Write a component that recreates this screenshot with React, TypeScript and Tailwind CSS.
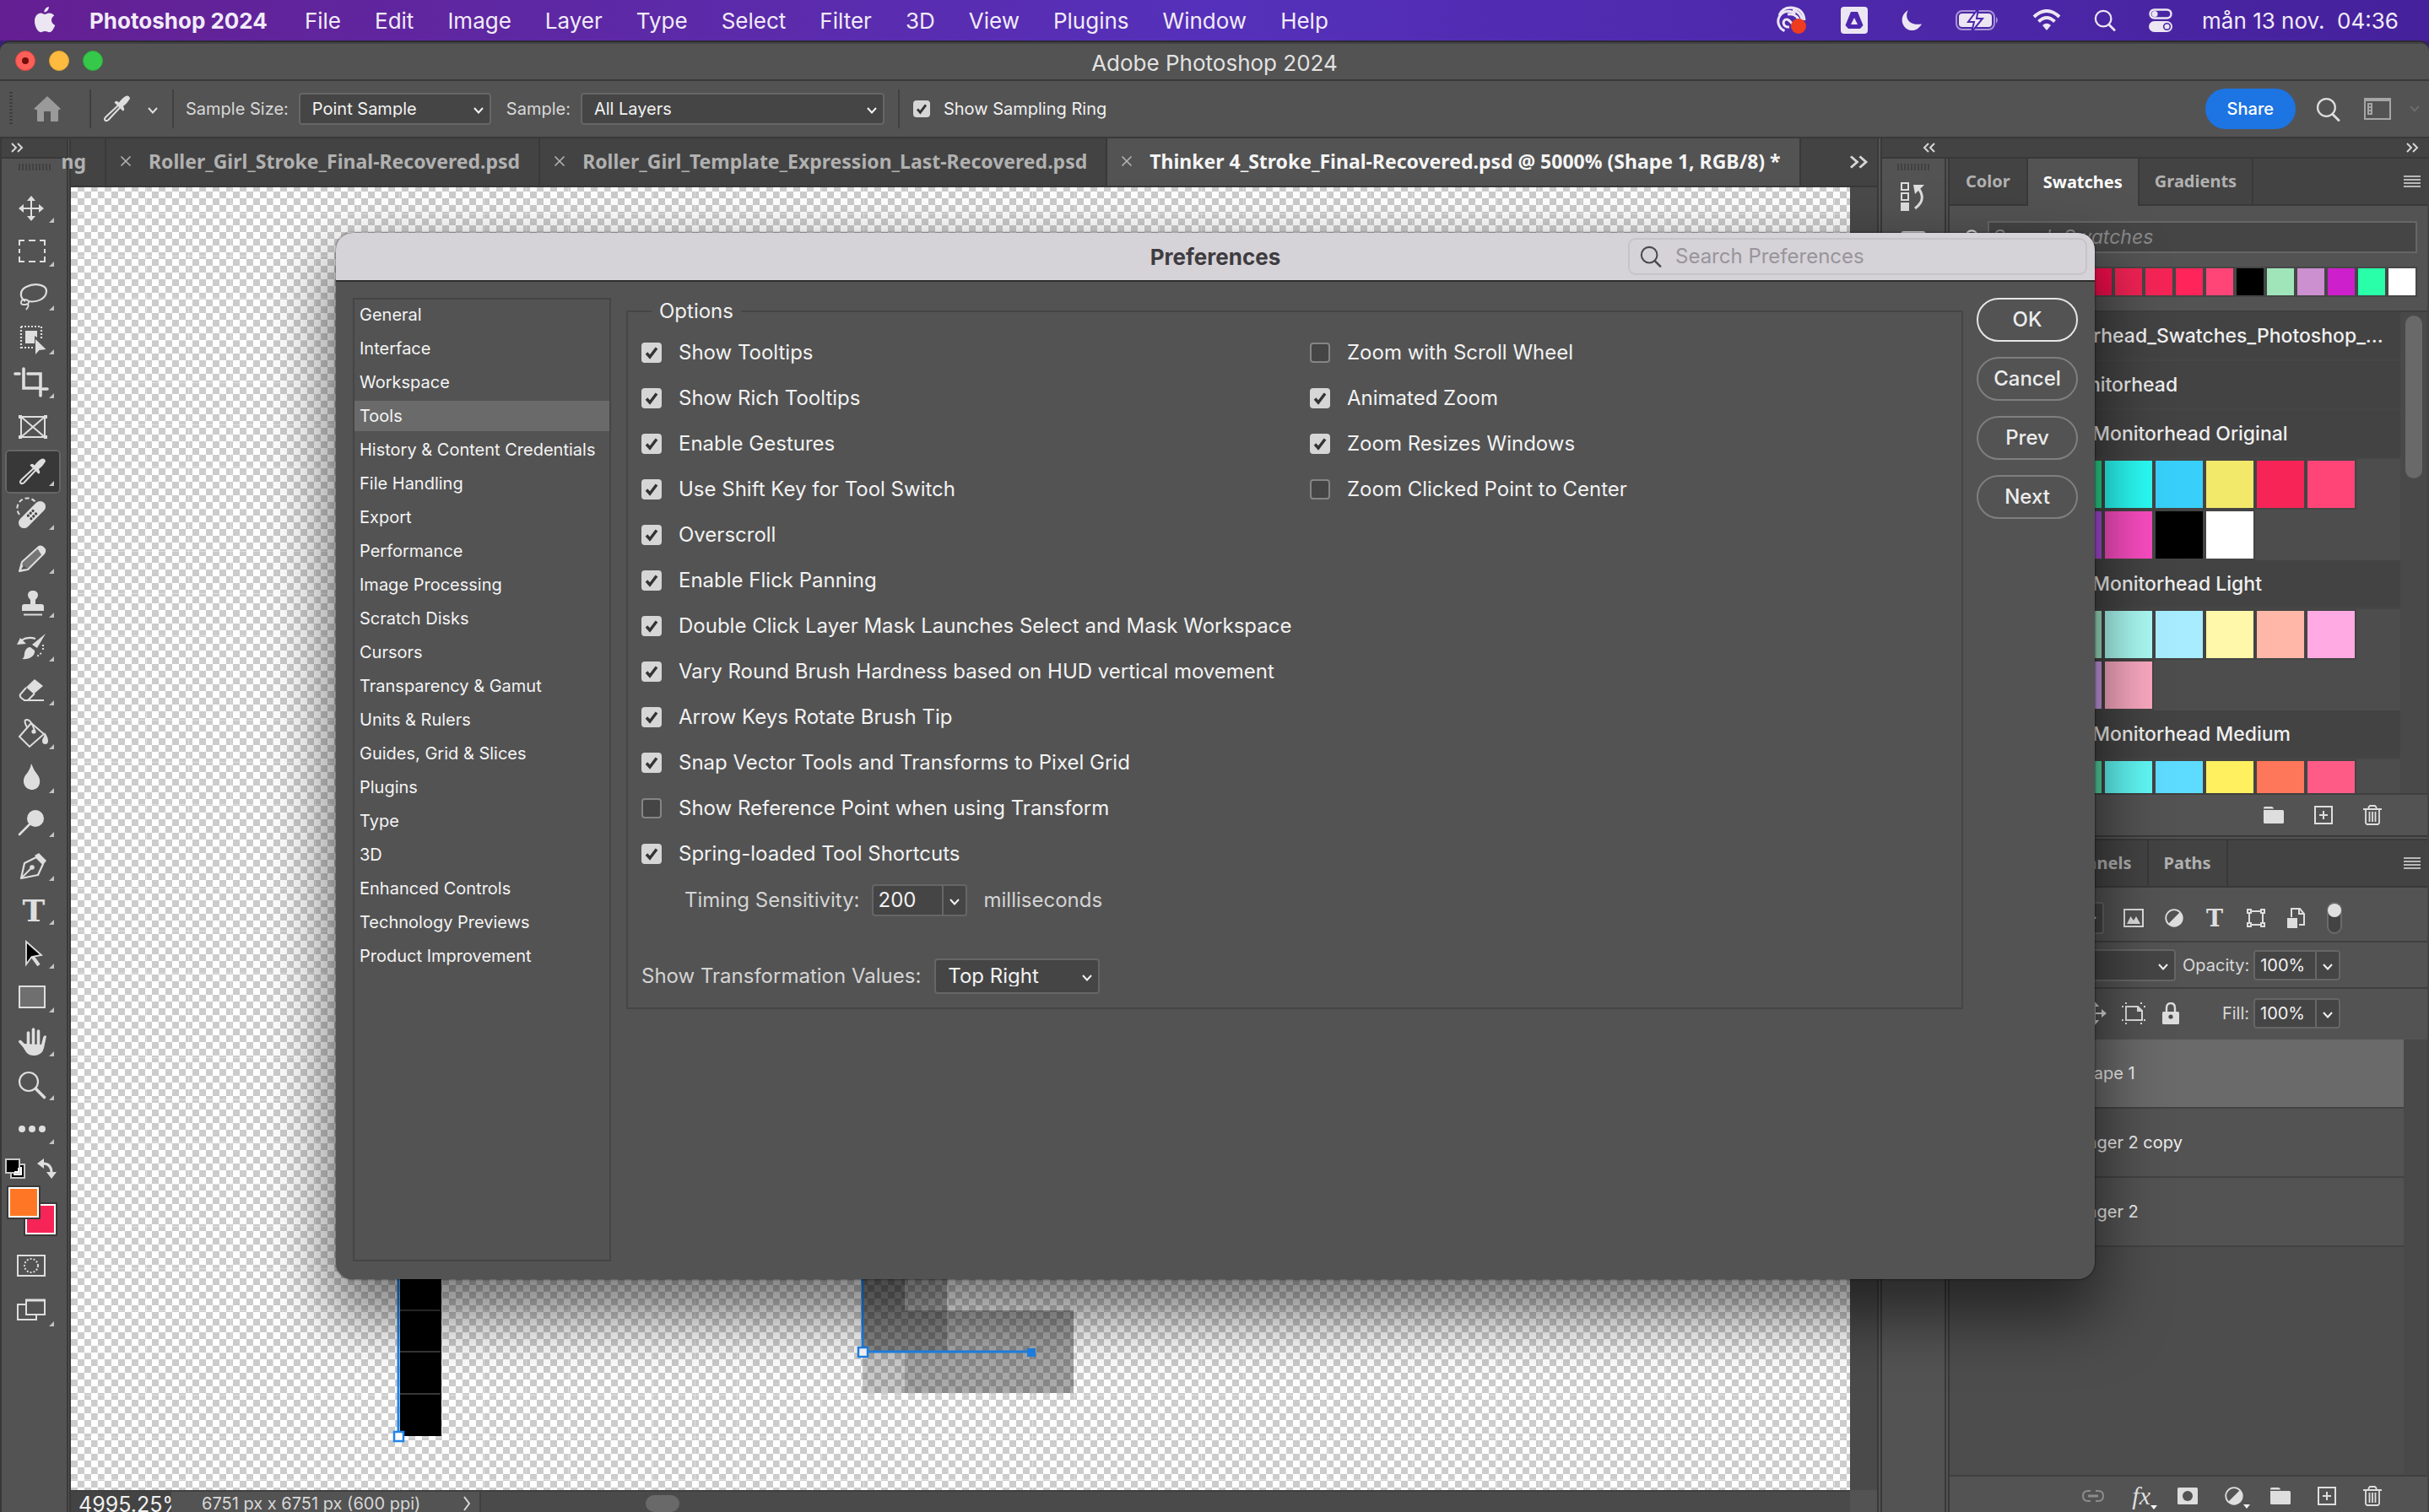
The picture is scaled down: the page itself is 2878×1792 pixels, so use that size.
import React from 'react';

const ink = '#dedede';

/* ---------- shared glyphs ---------- */

function Svg({ w, h, children, className = '' }: { w: number; h: number; children: React.ReactNode; className?: string }) {
  return (
    <svg width={w} height={h} viewBox={`0 0 ${w} ${h}`} fill="none" className={`shrink-0 ${className}`} aria-hidden="true">
      {children}
    </svg>
  );
}

function Chevron({ className = '' }: { className?: string }) {
  return (
    <Svg w={14} h={10} className={className}>
      <path d="M2 2l5 5.500L12 2" stroke="currentColor" strokeWidth="2" />
    </Svg>
  );
}

function DoubleChevron({ flip = false, big = false }: { flip?: boolean; big?: boolean }) {
  return (
    <svg width={big ? 24 : 16} height={big ? 16 : 12} viewBox="0 0 16 12" preserveAspectRatio="none" fill="none" aria-hidden="true" className={flip ? 'rotate-180' : ''}>
      <path d="M2 1l5 5-5 5M9 1l5 5-5 5" stroke="#d6d6d6" strokeWidth="2" />
    </svg>
  );
}

function Magnifier({ size, color, weight = 2.4 }: { size: number; color: string; weight?: number }) {
  return (
    <svg width={size} height={size} viewBox="0 0 28 28" fill="none" aria-hidden="true" className="shrink-0">
      <circle cx="12" cy="12" r="10" stroke={color} strokeWidth={weight} />
      <path d="M19 19.500l7 7" stroke={color} strokeWidth={weight + 0.6} strokeLinecap="round" />
    </svg>
  );
}

function TabClose() {
  return (
    <Svg w={14} h={14}>
      <path d="M1.500 1.500l11 11M12.500 1.500l-11 11" stroke="#b4b4b4" strokeWidth="1.600" />
    </Svg>
  );
}

function Lines() {
  return (
    <Svg w={20} h={16}>
      <path d="M0 2h20M0 6h20M0 10h20M0 14h20" stroke="#b8b8b8" strokeWidth="2" />
    </Svg>
  );
}

function Grip() {
  return (
    <Svg w={38} h={8}>
      <path d="M1 0v8M5 0v8M9 0v8M13 0v8M17 0v8M21 0v8M25 0v8M29 0v8M33 0v8M37 0v8" stroke="#414141" strokeWidth="2" />
    </Svg>
  );
}

function Folder() {
  return (
    <Svg w={24} h={22}>
      <path d="M0 3.500V2.500Q0 1 1.500 1H10l2 1.800V3.500Z" fill={ink} />
      <path d="M0 5h22.500Q24 5 24 6.500V19.500Q24 21 22.500 21H1.500Q0 21 0 19.500Z" fill={ink} />
    </Svg>
  );
}

function PlusBox() {
  return (
    <Svg w={22} h={22}>
      <rect x="1" y="1" width="20" height="20" stroke={ink} strokeWidth="2" />
      <path d="M11 6v10M6 11h10" stroke={ink} strokeWidth="2" />
    </Svg>
  );
}

function Trash() {
  return (
    <Svg w={22} h={24}>
      <path d="M0 5h22M6.500 5V2.500L8 1h6l1.500 1.500V5M3 5v16.500L4.500 23h13l1.500-1.500V5M7.500 8v12M11 8v12M14.500 8v12" stroke={ink} strokeWidth="1.800" />
    </Svg>
  );
}

function HalfCircle() {
  return (
    <Svg w={22} h={22}>
      <circle cx="11" cy="11" r="9.800" stroke={ink} strokeWidth="1.800" />
      <path d="M18 4A9.900 9.900 0 0 1 4 18Z" fill={ink} />
    </Svg>
  );
}

/* ---------- form parts ---------- */

function Check({ label, checked, small = false }: { label: string; checked: boolean; small?: boolean }) {
  return (
    <label className={small ? 'flex items-center gap-4 text-[20px] text-[#f0f0f0]' : 'flex h-[54px] items-center gap-5 text-[24px] text-[#f2f2f2]'}>
      <span className={small ? 'grid size-5 place-items-center' : 'grid size-6 place-items-center'}>
        <input
          type="checkbox"
          defaultChecked={checked}
          className="peer col-start-1 row-start-1 size-full appearance-none rounded-[4px] border-2 border-[#858585] bg-[#454545] checked:border-[#d6d6d6] checked:bg-[#d6d6d6]"
        />
        <svg viewBox="0 0 24 24" fill="none" className="pointer-events-none invisible col-start-1 row-start-1 size-full peer-checked:visible" aria-hidden="true">
          <path d="M6 12.500l4 4.500 8-10.500" stroke="#333" strokeWidth="3.400" />
        </svg>
      </span>
      {label}
    </label>
  );
}

function Dropdown({ label, value, className }: { label: string; value: string; className: string }) {
  return (
    <span className="relative flex items-center text-[#f2f2f2]">
      <select
        aria-label={label}
        className={`appearance-none rounded-[4px] border-2 border-[#666] bg-[#454545] pl-[14px] leading-none ${className}`}
      >
        <option>{value}</option>
      </select>
      <Chevron className="pointer-events-none absolute right-2 mt-1" />
    </span>
  );
}

function NumberCombo({ id, label, value, className }: { id: string; label: string; value: string; className: string }) {
  return (
    <span className="flex items-stretch overflow-hidden rounded-[4px] border-2 border-[#666] bg-[#454545] text-[#f2f2f2]">
      <input id={id} defaultValue={value} className={`min-w-0 bg-transparent pl-[6px] ${className}`} />
      <button aria-label={`${label} presets`} className="flex w-7 items-center justify-center border-l-2 border-[#666] pt-1">
        <Chevron />
      </button>
    </span>
  );
}

/* ---------- system menu bar ---------- */

const menus = ['File', 'Edit', 'Image', 'Layer', 'Type', 'Select', 'Filter', '3D', 'View', 'Plugins', 'Window', 'Help'];

function MenuBar() {
  return (
    <header className="flex h-12 shrink-0 items-center justify-between bg-linear-to-r from-[#641f92] via-[#5530ba] to-[#46219c] pr-9 pl-10 text-[26px] text-[#f1ebf7]">
      <nav className="flex items-center gap-10" aria-label="Application menu">
        <button aria-label="Apple" className="flex">
          <Svg w={26} h={34}>
            <path
              d="M17.800 1c.4 3.400-2.600 6.600-5.400 6.500C12 4.400 15 1.200 17.800 1ZM12.900 9.900c1.400 0 3.100-1.500 5.500-1.500 2.200 0 4.600 1.200 5.800 3.200-4.800 2.900-4 9.300 1 11.300-.9 2.700-3.600 8.300-6.700 8.300-2 0-2.700-1.200-5.200-1.200s-3.300 1.200-5.200 1.200C5 31.200 1 24.300 1 18.300 1 12 4.800 8.500 8.300 8.500c2 0 3.500 1.400 4.600 1.400Z"
              fill="#ece6f3"
            />
          </Svg>
        </button>
        <button className="mr-1 font-bold">Photoshop 2024</button>
        {menus.map((m) => (
          <button key={m}>{m}</button>
        ))}
      </nav>
      <div className="flex items-center gap-[39px]">
        <Svg w={42} h={34}>
          <path d="M14.500 29.500A12 12 0 1 1 27 9.500M8 11Q12 2 22 2q15 1 16 15" stroke="#ece6f3" strokeWidth="3" />
          <path d="M20 25c-8 1-9-9-3-9 5 0 5 8 14 9M18 10c9-2 14 5 14 10M24 5c7 1 11 7 11 12" stroke="#ece6f3" strokeWidth="3" />
          <circle cx="31" cy="24" r="9" fill="#ef3b1e" />
        </Svg>
        <Svg w={32} h={32}>
          <rect width="32" height="32" rx="4" fill="#ece6f3" />
          <path d="M12 6h8l6.500 16L23 26H9l-3.500-4ZM16 13l-4 8h8Z" fill="#4c27ad" fillRule="evenodd" />
        </Svg>
        <Svg w={26} h={26}>
          <path d="M9 1C4 9 9 20 25 17.500 21 24 16 25.500 12 25 1 23-3 8 9 1Z" fill="#ece6f3" />
        </Svg>
        <Svg w={52} h={26}>
          <rect x="1" y="2" width="45" height="22" rx="7" stroke="#a793d6" strokeWidth="2" />
          <rect x="4" y="5" width="39" height="16" rx="4" fill="#ece6f3" />
          <path d="M48 9q4 3.500 0 8Z" fill="#a793d6" />
          <path d="M27-1L15 15h7l-3 12 13-16h-7Z" fill="#ece6f3" stroke="#4c27ad" strokeWidth="2" />
        </Svg>
        <Svg w={34} h={26}>
          <path d="M2 9q15-14 30 0M7.500 14.500q9.500-9 19 0" stroke="#ece6f3" strokeWidth="4" />
          <path d="M12 19q5-4.500 10 0l-5 6Z" fill="#ece6f3" />
        </Svg>
        <Magnifier size={26} color="#ece6f3" />
        <Svg w={28} h={28}>
          <rect x="1.500" y="1.500" width="25" height="10" rx="5" stroke="#ece6f3" strokeWidth="2.400" />
          <circle cx="7" cy="6.500" r="3.600" fill="#ece6f3" />
          <rect x="0" y="15" width="28" height="13" rx="6.500" fill="#ece6f3" />
          <circle cx="21.500" cy="21.500" r="3.800" stroke="#4a25a8" strokeWidth="1.600" />
        </Svg>
        <span className="-ml-1 whitespace-pre">mån 13 nov.  04:36</span>
      </div>
    </header>
  );
}

/* ---------- options bar ---------- */

function Dropper({ size }: { size: number }) {
  return (
    <svg width={size} height={size} viewBox="0 0 32 32" fill="none" aria-hidden="true">
      <path d="M19 11L3.500 25.500Q1 28 2.500 29.500T6.500 29L21 13.500" stroke={ink} strokeWidth="2" />
      <path d="M13.500 8.500Q15 6 17 7l2 1.500C21 6 23 3 26 1.500Q29-.5 31 1.500T30.500 6C29 9 26 11 24 13l1 2.500Q26 18 23.500 18.500Z" fill={ink} />
    </svg>
  );
}

function OptionsBar() {
  return (
    <section aria-label="Tool options" className="flex h-[68px] shrink-0 items-center border-b-2 border-[#393939] bg-[#535353] text-[20px] text-[#d8d8d8]">
      <Svg w={6} h={40} className="ml-[10px]">
        <path d="M3 0v40" stroke="#404040" strokeWidth="4" strokeDasharray="2 2" />
      </Svg>
      <button aria-label="Home" className="ml-6">
        <Svg w={32} h={30}>
          <path d="M16 0L32 15l-3 1.500V29q0 1-1 1h-8V18h-8v12H5q-1 0-1-1V16.500L0 15Z" fill="#9a9a9a" />
        </Svg>
      </button>
      <span className="ml-[34px] h-[46px] w-0.5 bg-[#404040]" />
      <button aria-label="Eyedropper presets" className="ml-[14px] flex items-center gap-5 text-[#dedede]">
        <Dropper size={32} />
        <Chevron className="mt-1" />
      </button>
      <span className="ml-4 h-[46px] w-0.5 bg-[#404040]" />
      <span className="mr-3 ml-[14px]">Sample Size:</span>
      <Dropdown label="Sample Size" value="Point Sample" className="h-[38px] w-[228px]" />
      <span className="mr-3 ml-[18px]">Sample:</span>
      <Dropdown label="Sample" value="All Layers" className="h-[38px] w-[360px]" />
      <span className="mr-4 ml-4 h-[46px] w-0.5 bg-[#404040]" />
      <Check small checked label="Show Sampling Ring" />
      <div className="ml-auto flex items-center pr-[10px]">
        <button className="h-12 rounded-full bg-[#1d74e3] px-[26px] font-medium text-white">Share</button>
        <button aria-label="Search" className="ml-6">
          <Magnifier size={29} color={ink} weight={2.2} />
        </button>
        <button aria-label="Workspace" className="ml-7">
          <Svg w={32} h={26}>
            <path d="M1 1h30v24H1Z" stroke="#a5a5a5" strokeWidth="2" />
            <path d="M1 2.500h30" stroke="#a5a5a5" strokeWidth="3" />
            <path d="M4 6h6v14H4Z" fill="#a5a5a5" />
            <path d="M7 8v10" stroke="#535353" strokeWidth="2" strokeDasharray="2 2" />
          </Svg>
        </button>
        <Chevron className="ml-[21px] text-[#6c6c6c]" />
      </div>
    </section>
  );
}

/* ---------- tools column ---------- */

const serifT = (x: number, y: number, size: number) => (
  <text x={x} y={y} textAnchor="middle" fontFamily="DejaVu Serif" fontWeight="700" fontSize={size} fill={ink}>
    T
  </text>
);

const tools: { name: string; art: React.ReactNode; more?: boolean }[] = [
  {
    name: 'Move',
    art: (
      <>
        <path d="M17 26h28M31 12v28" stroke={ink} strokeWidth="2" />
        <path d="M31 11l5 6H26ZM31 41l5-6H26ZM16 26l6-5v10ZM46 26l-6-5v10Z" fill={ink} />
      </>
    ),
  },
  { name: 'Rectangular Marquee', art: <path d="M17 18v-6h6M28 12h8M41 12h6v6M47 22v5M47 31v6h-6M36 37h-8M23 37h-6v-6M17 27v-5" stroke={ink} strokeWidth="2" /> },
  {
    name: 'Lasso',
    art: (
      <>
        <path d="M24 32C17 28 17 19 25 15c10-5 24-3 24 5 0 9-11 14-22 12" stroke={ink} strokeWidth="2.200" />
        <path d="M22 30q6 0 6 3t-5 3-4-3 3-3Zm3 5q4 1 2 4l-2 3" stroke={ink} strokeWidth="1.800" />
      </>
    ),
  },
  {
    name: 'Object Selection',
    art: (
      <>
        <path d="M19 10h24M19 10v26M43 10v15M19 35h14" stroke={ink} strokeWidth="2.200" strokeDasharray="2 2" />
        <path d="M24 15h14v8l-3-2v9H24Z" fill={ink} />
        <path d="M36 25v18l4.500-5 8-1Z" fill={ink} />
      </>
    ),
  },
  { name: 'Crop', art: <path d="M12 14h5M22 8v23h18M27 14h15v26M45 32h5" stroke={ink} strokeWidth="3.600" strokeLinecap="round" /> },
  {
    name: 'Frame',
    more: false,
    art: (
      <>
        <path d="M19 13h28v24H19ZM19 13l28 24M47 13L19 37" stroke={ink} strokeWidth="2" />
        <path d="M16 11h4v4h-4ZM46 11h4v4h-4ZM16 35h4v4h-4ZM46 35h4v4h-4Z" fill={ink} />
      </>
    ),
  },
  {
    name: 'Eyedropper',
    art: (
      <g transform="translate(16 10)">
        <path d="M19 11L3.500 25.500Q1 28 2.500 29.500T6.500 29L21 13.500" stroke={ink} strokeWidth="2" />
        <path d="M13.500 8.500Q15 6 17 7l2 1.500C21 6 23 3 26 1.500Q29-.5 31 1.500T30.500 6C29 9 26 11 24 13l1 2.500Q26 18 23.500 18.500Z" fill={ink} />
      </g>
    ),
  },
  {
    name: 'Spot Healing Brush',
    art: (
      <>
        <path d="M17 25a12 12 0 0 1 19-15" stroke={ink} strokeWidth="2" strokeDasharray="5 3" />
        <g transform="rotate(-45 32 25)">
          <rect x="12" y="18.500" width="40" height="13" rx="6.500" fill={ink} />
          <circle cx="28" cy="22.500" r="1.600" fill="#444" />
          <circle cx="32" cy="27.500" r="1.600" fill="#444" />
          <circle cx="36" cy="22.500" r="1.600" fill="#444" />
          <circle cx="28" cy="27.500" r="1.600" fill="#444" />
          <circle cx="36" cy="27.500" r="1.600" fill="#444" />
          <circle cx="32" cy="22.500" r="1.600" fill="#444" />
        </g>
      </>
    ),
  },
  {
    name: 'Pencil',
    art: (
      <>
        <path d="M17 40l3-11 20-18q4-2 7 4-1 4-2 5L27 38Z" fill="#767676" stroke={ink} strokeWidth="2" strokeLinejoin="round" />
        <path d="M38 12.500q4-4 8-1t1 8l-3 2.500ZM17 40l3-8 5 6Z" fill={ink} />
        <path d="M19 38l3-5 4 4Z" fill="#535353" />
      </>
    ),
  },
  {
    name: 'Clone Stamp',
    art: (
      <>
        <path d="M33 11q6 0 6 5.500 0 3-3 5.500v5h7q3 0 3 3v5H20v-5q0-3 3-3h7v-5q-3-2.500-3-5.500Q27 11 33 11Z" fill={ink} />
        <path d="M22 39.500h22" stroke={ink} strokeWidth="2" />
      </>
    ),
  },
  {
    name: 'History Brush',
    art: (
      <>
        <path d="M48 10L38 27l-6-4ZM30 26l5 4c1 6-6 11-15 10 4-2 2-6 4-10 2-4 5-4 6-4Z" fill={ink} />
        <path d="M14 23l4-8 7 7Z" fill={ink} />
        <path d="M19 18q8-5 17-2" stroke={ink} strokeWidth="2" />
        <path d="M45 23v8M43 33l-5 4" stroke={ink} strokeWidth="2" strokeDasharray="2 2" />
      </>
    ),
  },
  {
    name: 'Eraser',
    art: (
      <>
        <path d="M35 12l10 8-11 9.500-9-8Z" fill={ink} />
        <path d="M25 22l-7 8q-1 2 1 4l4 3h4l8-8" stroke={ink} strokeWidth="2" />
        <path d="M22 37h24" stroke={ink} strokeWidth="2" />
      </>
    ),
  },
  {
    name: 'Paint Bucket',
    art: (
      <>
        <path d="M31 12l15 13-17 15L17 28Z" stroke={ink} strokeWidth="2" />
        <path d="M26 17q-5-9 0-9t9 13" stroke={ink} strokeWidth="2" />
        <circle cx="34" cy="22" r="2.600" fill={ink} />
        <path d="M47 23q4 6 4 10 0 4-3.500 4T44 33q0-2 2-5Z" fill={ink} />
      </>
    ),
  },
  { name: 'Blur', art: <path d="M31 8q3 8 8 14c5 8 1 17-7 17s-13-9-8-17q6-7 7-14Z" fill={ink} /> },
  {
    name: 'Dodge',
    art: (
      <>
        <circle cx="36" cy="21" r="10" fill={ink} />
        <path d="M29 28L17 40" stroke={ink} strokeWidth="2.600" strokeLinecap="round" />
      </>
    ),
  },
  {
    name: 'Pen',
    art: (
      <>
        <path d="M19 40l4-18 14-7 8 8-6 13Z" stroke={ink} strokeWidth="2.200" strokeLinejoin="round" />
        <path d="M35 13l5-3 9 9-4 5Z" fill={ink} />
        <path d="M19 40l12-12" stroke={ink} strokeWidth="2" />
        <circle cx="32" cy="27" r="2.800" fill={ink} />
      </>
    ),
  },
  { name: 'Type', art: serifT(34, 39, 36) },
  {
    name: 'Path Selection',
    art: (
      <>
        <path d="M32 28l8 11" stroke={ink} strokeWidth="4" />
        <path d="M25 11v27l6.500-9L43 27Z" fill="#000" stroke={ink} strokeWidth="1.800" />
      </>
    ),
  },
  { name: 'Rectangle', art: <rect x="17" y="12" width="30" height="25" fill="#6f6f6f" stroke={ink} strokeWidth="2" /> },
  {
    name: 'Hand',
    art: (
      <>
        <path d="M25 30l-6-6q-3-1-3 2 5 5 9 12 3 4 9 4h2q8-1 10-9l3-14q-3-2-4 2l-2 8-20-1Z" fill={ink} />
        <path d="M27.500 30V15M33.500 28V11M39.500 29V13" stroke={ink} strokeWidth="3.600" strokeLinecap="round" />
      </>
    ),
  },
  {
    name: 'Zoom',
    art: (
      <>
        <circle cx="28" cy="21" r="11" stroke={ink} strokeWidth="2.200" />
        <path d="M36.500 29.500l10 10" stroke={ink} strokeWidth="3.600" strokeLinecap="round" />
      </>
    ),
  },
  {
    name: 'Edit Toolbar',
    art: (
      <>
        <circle cx="20" cy="25" r="4" fill={ink} />
        <circle cx="32" cy="25" r="4" fill={ink} />
        <circle cx="44" cy="25" r="4" fill={ink} />
      </>
    ),
  },
];

function Tools() {
  return (
    <aside aria-label="Tools" className="flex w-[84px] shrink-0 flex-col border-x-2 border-[#393939] bg-[#535353] pr-px">
      <div className="flex h-full flex-col border-r-2 border-[#393939]">
        <div className="flex h-6 items-center border-b-2 border-[#393939] bg-[#434343] pl-[10px]">
          <DoubleChevron />
        </div>
        <div className="flex h-[33px] justify-center pt-[6px]">
          <Grip />
        </div>
        <div className="flex flex-col items-start pl-1">
          {tools.map((t) => (
            <button
              key={t.name}
              aria-label={t.name}
              className={
                t.name === 'Eyedropper'
                  ? 'h-[52px] w-[66px] rounded-[5px] bg-[#383838] ring-2 ring-[#666] ring-inset'
                  : 'h-[52px] w-[66px]'
              }
            >
              <Svg w={66} h={52}>
                {t.art}
                {t.more !== false && <path d="M58 37v6h-6Z" fill="#c4c4c4" />}
              </Svg>
            </button>
          ))}
          <div className="mt-2 flex w-[62px] justify-between">
            <button aria-label="Default colors">
              <Svg w={24} h={24}>
                <path d="M7 7h16v16H7Z" fill="#000" stroke="#c8c8c8" strokeWidth="2" />
                <path d="M10 10h10v10H10Z" fill="#fff" />
                <path d="M1 1h16v16H1Z" fill="#000" stroke="#c8c8c8" strokeWidth="2" />
                <path d="M11 16h5v-5" stroke="#fff" strokeWidth="2" />
              </Svg>
            </button>
            <button aria-label="Swap colors">
              <Svg w={24} h={24}>
                <path d="M7 6q10 0 10 11" stroke={ink} strokeWidth="3" />
                <path d="M0 6l8-6v12ZM17 24l-6-8h12Z" fill={ink} />
              </Svg>
            </button>
          </div>
          <div className="mt-2 ml-0.5 grid grid-cols-[20px_20px_20px] grid-rows-[20px_20px_20px]">
            <button aria-label="Background color" className="col-span-2 col-start-2 row-span-2 row-start-2 m-0.5 border-2 border-white bg-[#f72457] outline-2 outline-[#393939]" />
            <button aria-label="Foreground color" className="col-span-2 col-start-1 row-span-2 row-start-1 m-0.5 border-2 border-white bg-[#ff7724] outline-2 outline-[#393939]" />
          </div>
          <button aria-label="Quick mask" className="mt-[22px] ml-[14px]">
            <Svg w={34} h={26}>
              <rect x="1" y="1" width="32" height="24" stroke={ink} strokeWidth="2" />
              <ellipse cx="17" cy="13" rx="8" ry="8" stroke={ink} strokeWidth="2" strokeDasharray="2 2" />
            </Svg>
          </button>
          <button aria-label="Screen mode" className="mt-[26px] ml-[14px]">
            <Svg w={46} h={34}>
              <path d="M11 7H1v18h22v-6" stroke={ink} strokeWidth="2" />
              <path d="M11 2h22v17H11Z" stroke={ink} strokeWidth="2" />
              <path d="M10 2h24" stroke={ink} strokeWidth="3" />
              <path d="M44 27v6h-6Z" fill="#c4c4c4" />
            </Svg>
          </button>
        </div>
      </div>
    </aside>
  );
}

/* ---------- document ---------- */

function Artwork() {
  return (
    <svg width="1200" height="240" viewBox="0 0 1200 240" fill="none" className="absolute top-[1279px] left-[380px]" aria-hidden="true">
      {/* solid pixel column with its path */}
      <path d="M10 0h49v201H10Z" fill="#000" />
      <path d="M10 52h48M10 101h48M10 151h48" stroke="#4a4a4a" strokeWidth="1.500" />
      <path d="M8 0v201" stroke="#1f84ea" strokeWidth="3" />
      <rect x="3" y="196" width="11" height="11" fill="#fff" stroke="#1f84ea" strokeWidth="2.500" />
      {/* translucent corner shape */}
      <g fill="#000">
        <path d="M558 0h50v52h50v49H558Z" fillOpacity=".46" />
        <path d="M608 0h50v52h-50Z" fillOpacity=".27" />
        <path d="M658 52h150v98H608v-49h50Z" fillOpacity=".33" />
        <path d="M558 101h50v49h-50Z" fillOpacity=".2" />
      </g>
      <path d="M558 0v101h200" stroke="#1f84ea" strokeWidth="3" />
      <rect x="553" y="96" width="11" height="11" fill="#fff" stroke="#1f84ea" strokeWidth="2.500" />
      <rect x="753" y="97" width="10" height="10" fill="#1f84ea" />
    </svg>
  );
}

function Document() {
  const tab = 'flex items-center gap-5 border-r-2 border-[#393939] pt-0 pr-[22px] pb-[2px] pl-4 whitespace-nowrap';
  return (
    <main className="flex min-w-0 flex-1 flex-col">
      <div role="tablist" className="flex h-[58px] shrink-0 border-b-2 border-[#393939] bg-[#434343] font-['Noto_Sans','Open_Sans',sans-serif] text-[23px] font-bold text-[#b1b1b1]">
        <button role="tab" className="flex w-[42px] items-center justify-end border-r-2 border-[#393939] pr-[22px] pb-[2px]">
          ng
        </button>
        <button role="tab" className={tab}>
          <TabClose />
          Roller_Girl_Stroke_Final-Recovered.psd
        </button>
        <button role="tab" className={tab}>
          <TabClose />
          Roller_Girl_Template_Expression_Last-Recovered.psd
        </button>
        <button role="tab" aria-selected="true" className={`${tab} bg-[#535353] text-[#f5f5f5]`}>
          <TabClose />
          Thinker 4_Stroke_Final-Recovered.psd @ 5000% (Shape 1, RGB/8) *
        </button>
        <button aria-label="More documents" className="ml-auto pr-[10px]">
          <DoubleChevron big />
        </button>
      </div>
      <div className="flex min-h-0 flex-1">
        <div className="relative flex-1 overflow-hidden bg-white bg-[conic-gradient(#fff_25%,#ccc_0_50%,#fff_0_75%,#ccc_0)] bg-size-[16px_16px] bg-position-[8px_-3px]">
          <div className="absolute inset-0 bg-[repeating-linear-gradient(90deg,rgba(255,255,255,0.35)_0_1px,transparent_1px_50px)] bg-position-[39px_0px]" />
          <div className="absolute inset-0 bg-[repeating-linear-gradient(rgba(255,255,255,0.35)_0_1px,transparent_1px_50px)] bg-position-[0px_31px]" />
          <Artwork />
        </div>
        <div className="w-8 shrink-0 bg-[#4a4a4a]" />
      </div>
      <footer className="flex h-[26px] shrink-0 overflow-hidden bg-[#535353]">
        <div className="flex min-w-0 flex-1 items-start border-t-2 border-[#3f3f3f] bg-[#4a4a4a]">
          <input aria-label="Zoom level" defaultValue="4995.25%" className="h-8 w-[119px] bg-[#434343] pl-[9px] text-[25px] text-[#f0f0f0]" />
          <button className="flex h-8 w-[367px] items-center justify-between border-r-2 border-[#404040] bg-[#535353] pr-[10px] pb-1 pl-9 text-[20px] text-[#d8d8d8]">
            6751 px x 6751 px (600 ppi)
            <Svg w={10} h={18}>
              <path d="M2 1l6 8-6 8" stroke="#d8d8d8" strokeWidth="2" />
            </Svg>
          </button>
          <div className="mt-1 ml-[195px] h-5 w-10 rounded-full bg-[#696969]" />
        </div>
        <div className="w-8" />
      </footer>
    </main>
  );
}

/* ---------- right-hand panels ---------- */

const recent = ['#29ffa8', '#2affff', '#38d0fa', '#f2e86a', '#f20d4b', '#ef2253', '#f52456', '#ff2459', '#ff4577', '#000000', '#a0e5ba', '#cc8fd0', '#cd1fcb', '#29ffa8', '#ffffff'];

const groups = [
  {
    name: 'Monitorhead Original',
    colors: ['#4d4d4d', '#26d98d', '#2afbf5', '#38d0fa', '#f2e86a', '#f72457', '#ff4577', '#a02be0', '#a94bdc', '#f94cc0', '#000000', '#ffffff'],
  },
  {
    name: 'Monitorhead Light',
    colors: ['#d9d9d9', '#a0e5c6', '#aafaf3', '#a8edff', '#fff7aa', '#ffb8a8', '#ffaae2', '#caa6f0', '#c99be6', '#f9a8c0'],
  },
  {
    name: 'Monitorhead Medium',
    colors: ['#999999', '#53dba4', '#60f8f5', '#5edcff', '#fff060', '#ff775a', '#ff5b87'],
  },
];

function Panels() {
  const row = 'flex h-[58px] shrink-0 items-center border-b-2 border-[#464646] bg-[#434343]';
  return (
    <div className="flex w-[568px] shrink-0 flex-col border-r-2 border-[#434343] bg-[#535353] text-[#f0f0f0]">
      {/* swatches */}
      <div role="tablist" className="flex h-14 shrink-0 border-[#393939] bg-[#434343] font-['Noto_Sans',sans-serif] text-[20px] font-bold text-[#b1b1b1]">
        <button role="tab" className="border-r-2 border-b-2 border-[#393939] px-[19px]">Color</button>
        <button role="tab" aria-selected="true" className="bg-[#535353] px-[18px] text-white">Swatches</button>
        <button role="tab" className="border-x-2 border-b-2 border-[#393939] px-[18px]">Gradients</button>
        <div className="flex flex-1 items-center justify-end border-b-2 border-[#393939] pr-2">
          <button aria-label="Swatches menu"><Lines /></button>
        </div>
      </div>
      <label className="mt-[17px] ml-[18px] flex h-10 items-center gap-2">
        <Magnifier size={19} color={ink} weight={3} />
        <input placeholder="Search Swatches" className="mr-3 h-[38px] min-w-0 flex-1 border-2 border-[#666] bg-[#454545] pl-1 text-[23px] italic placeholder:text-[#8a8a8a]" />
      </label>
      <div className="mt-[15px] flex shrink-0 pl-[14px]">
        {recent.map((c, i) => (
          <button key={i} aria-label={`Recent ${c}`} className="size-9 border-2 border-[#464646]" style={{ backgroundColor: c }} />
        ))}
      </div>
      <div className="mt-4 flex h-[574px] shrink-0 overflow-hidden border-y-2 border-[#3f3f3f] bg-[#4d4d4d]">
        <div className="flex min-w-0 flex-1 flex-col text-[23px] font-medium">
          <div className={`${row} pl-[94px]`}>
            <span className="whitespace-nowrap">Monitorhead_Swatches_Photoshop_...</span>
          </div>
          <div className={`${row} pl-[130px]`}>Monitorhead</div>
          {groups.map((g) => (
            <React.Fragment key={g.name}>
              <div className={`${row} pl-[169px]`}>{g.name}</div>
              <div className="grid shrink-0 grid-cols-[repeat(7,60px)] pl-[62px]">
                {g.colors.map((c) => (
                  <button key={c} aria-label={`${g.name} ${c}`} className="size-[60px] border-2 border-[#444]" style={{ backgroundColor: c }} />
                ))}
              </div>
            </React.Fragment>
          ))}
        </div>
        <div className="w-8 bg-[#494949] px-[6px] pt-1">
          <div className="h-[193px] w-5 rounded-full bg-[#696969]" />
        </div>
      </div>
      <div className="flex h-[50px] shrink-0 items-center justify-end gap-9 border-b-2 border-[#393939] pr-[54px]">
        <button aria-label="New group"><Folder /></button>
        <button aria-label="New swatch"><PlusBox /></button>
        <button aria-label="Delete swatch"><Trash /></button>
      </div>

      {/* layers */}
      <div role="tablist" className="mt-[2px] flex h-[58px] shrink-0 border-y-2 border-[#393939] bg-[#434343] font-['Noto_Sans',sans-serif] text-[20px] font-bold text-[#b1b1b1]">
        <button role="tab" aria-selected="true" className="bg-[#535353] px-[18px] text-white">Layers</button>
        <button role="tab" className="w-[134px] border-r-2 border-[#393939] pr-[18px] text-right">Channels</button>
        <button role="tab" className="border-r-2 border-[#393939] px-[18px]">Paths</button>
        <button aria-label="Layers menu" className="ml-auto pr-2"><Lines /></button>
      </div>
      <div className="flex h-[65px] shrink-0 items-center border-b-2 border-[#404040] pt-[8px] pl-[14px] text-[20px]">
        <Dropdown label="Filter kind" value="Kind" className="h-[38px] w-[169px]" />
        <div className="ml-[23px] flex flex-1 items-center gap-[25px]">
          <button aria-label="Filter pixel layers">
            <Svg w={24} h={22}>
              <rect x="1" y="1" width="22" height="20" stroke={ink} strokeWidth="2" />
              <path d="M4 18l4.500-9 3.500 5 3-5 5 9Z" fill={ink} />
            </Svg>
          </button>
          <button aria-label="Filter adjustment layers"><HalfCircle /></button>
          <button aria-label="Filter type layers">
            <Svg w={24} h={30}>{serifT(12, 25, 27)}</Svg>
          </button>
          <button aria-label="Filter shape layers">
            <Svg w={24} h={24}>
              <rect x="4" y="4" width="16" height="16" stroke={ink} strokeWidth="2" />
              <path d="M2 2h4v4H2ZM18 2h4v4h-4ZM2 18h4v4H2ZM18 18h4v4h-4Z" fill="#535353" stroke={ink} strokeWidth="2" />
            </Svg>
          </button>
          <button aria-label="Filter smart objects">
            <Svg w={22} h={24}>
              <path d="M5 11V1h10l5 6v13h-6M14 1v6h6" stroke={ink} strokeWidth="2" />
              <rect x="0" y="12" width="12" height="12" fill={ink} />
            </Svg>
          </button>
          <button aria-label="Toggle filtering" className="flex h-[38px] w-[18px] items-start justify-center rounded-full border-2 border-[#6a6a6a] bg-[#434343]">
            <span className="size-4 shrink-0 rounded-full bg-[#e0e0e0]" />
          </button>
        </div>
      </div>
      <div className="flex h-[55px] shrink-0 items-center border-b-2 border-[#404040] pl-[14px] text-[20px]">
        <Dropdown label="Blend mode" value="Normal" className="h-[38px] w-[254px]" />
        <label htmlFor="opacity" className="mr-[5px] ml-2 text-[#d8d8d8]">Opacity:</label>
        <NumberCombo id="opacity" label="Opacity" value="100%" className="h-8 w-[71px]" />
      </div>
      <div className="flex h-[60px] shrink-0 items-center pb-[3px] pl-[158px] text-[20px]">
        <button aria-label="Lock position">
          <Svg w={28} h={28}>
            <path d="M2 14h24M14 2v24" stroke={ink} strokeWidth="2" />
            <path d="M14 0l5 6H9ZM14 28l5-6H9ZM0 14l6-5v10ZM28 14l-6-5v10Z" fill={ink} />
          </Svg>
        </button>
        <button aria-label="Lock artboard" className="ml-[18px]">
          <Svg w={28} h={26}>
            <path d="M5 5h14l5 5v11H5Z" stroke={ink} strokeWidth="2" />
            <path d="M18 4v7h7Z" fill={ink} />
            <path d="M0 5h2M5 0v2M23 0v2M26 5h2M0 21h2M5 24v2M23 24v2M26 21h2" stroke={ink} strokeWidth="2" />
          </Svg>
        </button>
        <button aria-label="Lock all" className="ml-5">
          <Svg w={20} h={26}>
            <path d="M5 13V7q0-6 5-6t5 6v6" stroke={ink} strokeWidth="2.400" />
            <path d="M1.500 11h17q1.500 0 1.500 1.500v12q0 1.500-1.500 1.500h-17Q0 26 0 24.500v-12Q0 11 1.500 11Z" fill={ink} />
            <circle cx="10" cy="17" r="2.600" fill="#4a4a4a" />
          </Svg>
        </button>
        <label htmlFor="fill" className="mr-[5px] ml-auto text-[#d8d8d8]">Fill:</label>
        <span className="mr-[103px]">
          <NumberCombo id="fill" label="Fill" value="100%" className="h-8 w-[71px]" />
        </span>
      </div>
      <div className="flex min-h-0 flex-1 bg-[#4d4d4d] text-[20px]">
        <ul className="flex-1">
          <li className="flex h-[82px] items-center border-b-2 border-[#434343] bg-[#6a6a6a] pl-[146px]">Shape 1</li>
          <li className="flex h-[82px] items-center border-b-2 border-[#434343] bg-[#535353] pl-[146px]">Finger 2 copy</li>
          <li className="flex h-[82px] items-center border-b-2 border-[#434343] bg-[#535353] pl-[146px]">Finger 2</li>
        </ul>
        <div className="w-7 bg-[#494949]" />
      </div>
      <div className="flex h-11 shrink-0 items-center justify-end gap-8 border-t-2 border-[#3f3f3f] pt-1 pr-[54px]">
        <button aria-label="Link layers">
          <Svg w={28} h={16}>
            <path d="M11 2H8Q2 2 2 8t6 6h3M17 2h3q6 0 6 6t-6 6h-3" stroke="#8c8c8c" strokeWidth="2" />
            <path d="M8 8h12" stroke="#8c8c8c" strokeWidth="3" />
          </Svg>
        </button>
        <button aria-label="Layer effects" className="-mr-2 flex items-end font-['Liberation_Serif',serif] text-[30px] leading-6 text-[#dedede] italic">
          fx
          <Svg w={8} h={5} className="-mb-1">
            <path d="M0 0h8L4 5Z" fill="#f4f4f4" />
          </Svg>
        </button>
        <button aria-label="Add mask">
          <Svg w={24} h={20}>
            <rect width="24" height="20" rx="1.500" fill={ink} />
            <circle cx="12" cy="10" r="6" fill="#535353" />
          </Svg>
        </button>
        <button aria-label="New adjustment layer" className="relative">
          <HalfCircle />
          <Svg w={8} h={5} className="absolute -right-2 -bottom-1">
            <path d="M0 0h8L4 5Z" fill="#f4f4f4" />
          </Svg>
        </button>
        <button aria-label="New layer group"><Folder /></button>
        <button aria-label="New layer"><PlusBox /></button>
        <button aria-label="Delete layer"><Trash /></button>
      </div>
    </div>
  );
}

function Dock() {
  return (
    <div className="flex shrink-0 flex-col border-l-2 border-[#393939] bg-[#535353]">
      <div className="ml-[2px] flex h-6 shrink-0 items-center justify-between border-b-2 border-l-2 border-[#393939] bg-[#434343] pr-3 pl-12">
        <DoubleChevron flip />
        <DoubleChevron />
      </div>
      <div className="ml-[2px] flex min-h-0 flex-1 border-l-2 border-[#393939]">
        <div className="flex w-[76px] shrink-0 flex-col items-center border-r-2 border-[#393939] pt-[6px]">
          <Grip />
          <button aria-label="History" className="mt-[14px]">
            <Svg w={30} h={34}>
              <path d="M1 1h8v8H1ZM1 13h8v8H1Z" stroke={ink} strokeWidth="2" />
              <path d="M0 24h10v10H0Z" fill={ink} />
              <path d="M17 31Q32 20 20 6" stroke={ink} strokeWidth="3" />
              <path d="M15 3h13l-11 11Z" fill={ink} />
            </Svg>
          </button>
          <button aria-label="Comments" className="mt-6">
            <Svg w={30} h={24}>
              <rect x="1" y="1" width="28" height="20" rx="3" stroke={ink} strokeWidth="2" />
            </Svg>
          </button>
        </div>
        <div className="w-[4px] border-r-2 border-[#393939]" />
        <Panels />
      </div>
    </div>
  );
}

/* ---------- preferences dialog ---------- */

const sections = [
  'General', 'Interface', 'Workspace', 'Tools', 'History & Content Credentials', 'File Handling', 'Export', 'Performance',
  'Image Processing', 'Scratch Disks', 'Cursors', 'Transparency & Gamut', 'Units & Rulers', 'Guides, Grid & Slices',
  'Plugins', 'Type', '3D', 'Enhanced Controls', 'Technology Previews', 'Product Improvement',
];

const leftOptions: [string, boolean][] = [
  ['Show Tooltips', true],
  ['Show Rich Tooltips', true],
  ['Enable Gestures', true],
  ['Use Shift Key for Tool Switch', true],
  ['Overscroll', true],
  ['Enable Flick Panning', true],
  ['Double Click Layer Mask Launches Select and Mask Workspace', true],
  ['Vary Round Brush Hardness based on HUD vertical movement', true],
  ['Arrow Keys Rotate Brush Tip', true],
  ['Snap Vector Tools and Transforms to Pixel Grid', true],
  ['Show Reference Point when using Transform', false],
  ['Spring-loaded Tool Shortcuts', true],
];

const rightOptions: [string, boolean][] = [
  ['Zoom with Scroll Wheel', false],
  ['Animated Zoom', true],
  ['Zoom Resizes Windows', true],
  ['Zoom Clicked Point to Center', false],
];

function Preferences() {
  return (
    <div className="pointer-events-none absolute inset-x-0 top-[276px] flex justify-center pl-[2px]">
      <div
        role="dialog"
        aria-label="Preferences"
        className="pointer-events-auto flex h-[1240px] w-[2084px] flex-col overflow-hidden rounded-[20px] bg-[#535353] shadow-[0_0_2px_1px_rgba(0,0,0,0.35),0_36px_76px_8px_rgba(0,0,0,0.52)]"
      >
        <div className="grid h-[58px] shrink-0 grid-cols-[1fr_auto_1fr] items-center border-b-2 border-[#2e2e2e] bg-[#d5d2d8] px-[9px]">
          <h1 className="col-start-2 text-[26px] font-bold text-[#3e3c40]">Preferences</h1>
          <label className="flex h-11 w-[544px] items-center gap-4 justify-self-end rounded-[9px] border-2 border-[#c6c3c9] px-3">
            <Magnifier size={26} color="#4b494d" weight={2.2} />
            <input placeholder="Search Preferences" className="min-w-0 flex-1 bg-transparent text-[24px] text-[#3e3c40] placeholder:text-[#98959b]" />
          </label>
        </div>
        <div className="flex min-h-0 flex-1 items-start pt-[19px] pr-5 pb-5 pl-5">
          <nav aria-label="Preference sections" className="flex h-[1142px] w-[306px] shrink-0 flex-col gap-1 border-2 border-[#454545]">
            {sections.map((s) => (
              <button
                key={s}
                className={
                  s === 'Tools'
                    ? 'h-9 bg-[#6a6a6a] pl-[6px] text-left text-[20px] whitespace-nowrap text-[#f4f4f4]'
                    : 'h-9 pl-[6px] text-left text-[20px] whitespace-nowrap text-[#f4f4f4]'
                }
              >
                {s}
              </button>
            ))}
          </nav>
          <fieldset className="ml-[18px] min-w-0 flex-1 border-2 border-[#454545] pr-4 pb-4 pl-4 text-[24px] text-[#d4d4d4]">
            <legend className="ml-3 px-[9px] leading-[32px] text-[#f0f0f0]">Options</legend>
            <div className="grid grid-cols-[792px_1fr]">
              <div className="mt-[6px]">
                {leftOptions.map(([label, on]) => (
                  <Check key={label} label={label} checked={on} />
                ))}
              </div>
              <div className="mt-[6px]">
                {rightOptions.map(([label, on]) => (
                  <Check key={label} label={label} checked={on} />
                ))}
              </div>
            </div>
            <div className="mt-2 flex h-10 items-center pl-[51px]">
              <label htmlFor="timing" className="mr-[14px]">Timing Sensitivity:</label>
              <NumberCombo id="timing" label="Timing Sensitivity" value="200" className="h-[34px] w-[81px]" />
              <span className="ml-5">milliseconds</span>
            </div>
            <div className="mt-[49px] flex h-[42px] items-center">
              <span className="mr-4">Show Transformation Values:</span>
              <Dropdown label="Show Transformation Values" value="Top Right" className="h-[42px] w-[196px]" />
            </div>
          </fieldset>
          <div className="ml-4 flex flex-col gap-[18px] text-[24px] font-medium text-[#ececec]">
            <button className="h-[52px] w-[120px] rounded-full border-2 border-[#e6e6e6]">OK</button>
            <button className="h-[52px] w-[120px] rounded-full border-2 border-[#7f7f7f]">Cancel</button>
            <button className="h-[52px] w-[120px] rounded-full border-2 border-[#7f7f7f]">Prev</button>
            <button className="h-[52px] w-[120px] rounded-full border-2 border-[#7f7f7f]">Next</button>
          </div>
        </div>
      </div>
    </div>
  );
}

export default function App() {
  return (
    <div className="relative flex h-screen flex-col overflow-hidden bg-[#3c1e7a] font-['Inter','Liberation_Sans',sans-serif]">
      <MenuBar />
      <div className="flex min-h-0 flex-1 flex-col overflow-hidden rounded-t-[12px] border-t-2 border-[#2b2b33] bg-[#535353]">
        <div className="flex h-[46px] shrink-0 items-center border-b-2 border-[#393939] px-[18px] shadow-[inset_0_2px_0_#434343]">
          <div className="flex flex-1 gap-4">
            <button aria-label="Close" className="grid size-6 place-items-center rounded-full border border-[#dc4640] bg-[#fe5f58]">
              <span className="size-2 rounded-full bg-[#740f0b]" />
            </button>
            <button aria-label="Minimize" className="size-6 rounded-full border border-[#dfa030] bg-[#febb40]" />
            <button aria-label="Zoom window" className="size-6 rounded-full border border-[#2aad38] bg-[#36c84b]" />
          </div>
          <h2 className="pt-1 text-[26px] text-[#e2e2e2]">Adobe Photoshop 2024</h2>
          <div className="flex-1" />
        </div>
        <OptionsBar />
        <div className="flex min-h-0 flex-1">
          <Tools />
          <Document />
          <Dock />
        </div>
      </div>
      <Preferences />
    </div>
  );
}
